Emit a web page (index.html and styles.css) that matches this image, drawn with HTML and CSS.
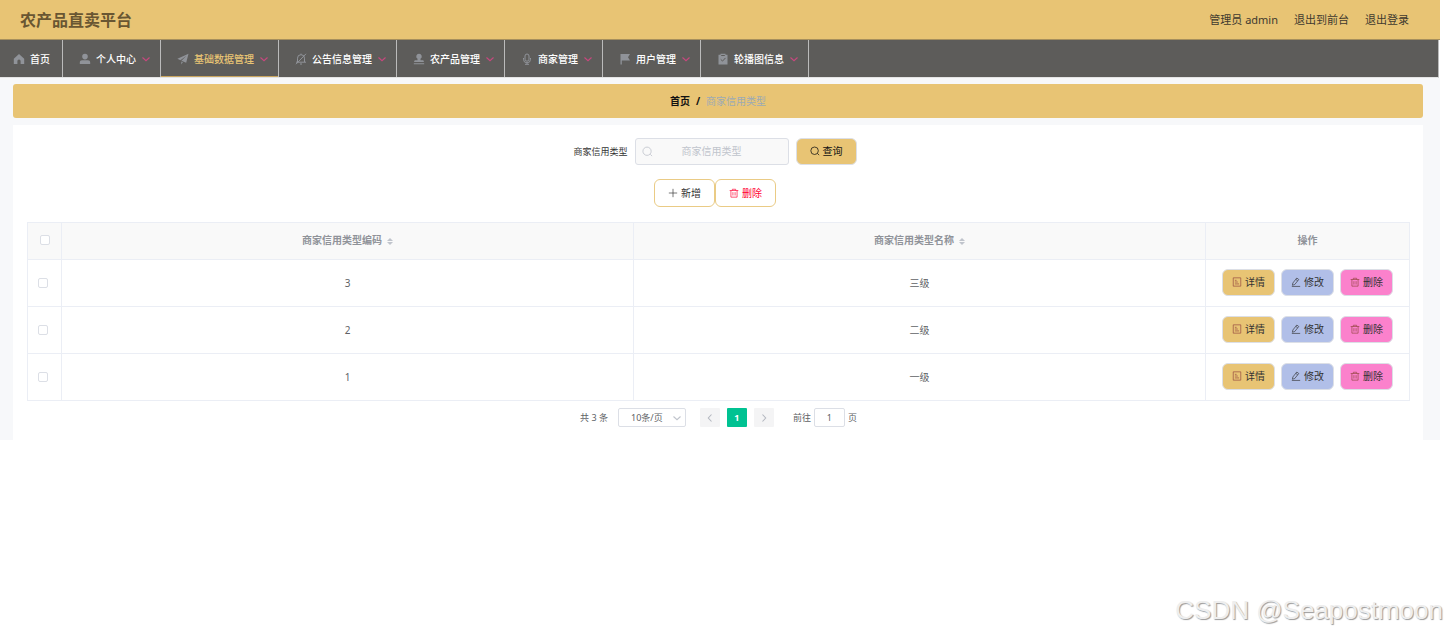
FILE: index.html
```html
<!DOCTYPE html>
<html lang="zh-CN">
<head>
    <meta charset="UTF-8">
    <meta name="viewport" content="width=device-width, initial-scale=1.0">
    <title>农产品直卖平台</title>
    <link rel="stylesheet" href="styles.css">
</head>
<body>
    <svg class="sprite" aria-hidden="true">
        <symbol id="i-down" viewBox="0 0 8 8"><path d="M.5 2.500L4 5.700l3.500-3.200" fill="none" stroke="currentColor" stroke-width="1.100"/></symbol>
        <symbol id="i-search" viewBox="0 0 12 12"><path d="M9 9l2 2M10 5.700a4.500 4.500 0 1 1-9 0 4.500 4.500 0 0 1 9 0z" fill="none" stroke="currentColor" stroke-width=".9"/></symbol>
        <symbol id="i-trash" viewBox="0 0 12 12"><path d="M.8 3h10.400M4 3V1.500h4V3M2.300 3v8h7.400V3M4.700 5v4M7.300 5v4" fill="none" stroke="currentColor" stroke-width=".8"/></symbol>
        <symbol id="i-doc" viewBox="0 0 12 12"><path d="M1.500 1h9v10h-9zM3.500 4h2M3.500 6h3.500M3.500 8.300h5" fill="none" stroke="currentColor" stroke-width=".8"/></symbol>
        <symbol id="i-edit" viewBox="0 0 12 12"><path d="M2.200 7.200L7 1.200l2.300 1.800-4.800 6-2.800.9zM1 11.300h10M5.800 2.800l2.200 1.800" fill="none" stroke="currentColor" stroke-width=".8"/></symbol>
    </svg>

    <header class="topbar">
        <h1>农产品直卖平台</h1>
        <div class="topbar-links">
            <span>管理员 admin</span>
            <a href="#">退出到前台</a>
            <a href="#">退出登录</a>
        </div>
    </header>

    <nav class="menu">
        <a href="#" class="menu-item home">
            <svg class="icon" viewBox="0 0 12 12"><path d="M6 1L.8 5.800V11h3.600V8a1.600 1.600 0 0 1 3.200 0v3h3.600V5.800z" fill="currentColor"/></svg>
            <span>首页</span>
        </a>
        <a href="#" class="menu-item">
            <svg class="icon" viewBox="0 0 12 12"><path d="M6 .8a2.800 2.800 0 1 1 0 5.600A2.800 2.800 0 0 1 6 .8zM.8 11V9.400c0-1.300 1-2.200 2.200-2.200h6c1.200 0 2.200.9 2.200 2.200V11z" fill="currentColor"/></svg>
            <span>个人中心</span>
            <svg class="arrow"><use href="#i-down"/></svg>
        </a>
        <a href="#" class="menu-item active">
            <svg class="icon" viewBox="0 0 12 12"><path d="M11.500.8L.4 5.800l3 1.400L9.500 2.800 4.400 7.700l4.800 2.100zM4.300 8.500v3l1.600-2.200z" fill="currentColor"/></svg>
            <span>基础数据管理</span>
            <svg class="arrow"><use href="#i-down"/></svg>
        </a>
        <a href="#" class="menu-item">
            <svg class="icon" viewBox="0 0 12 12"><path d="M2.500 9V5.200a3.500 3.500 0 0 1 7 0V9M1 9.200h10M5 11h2M6 .6v1M11 .8L1 11.200" fill="none" stroke="currentColor"/></svg>
            <span>公告信息管理</span>
            <svg class="arrow"><use href="#i-down"/></svg>
        </a>
        <a href="#" class="menu-item">
            <svg class="icon" viewBox="0 0 12 12"><path d="M6 .8a2.700 2.700 0 0 1 1.500 5v1.400h2.800l.7 1.800H1l.7-1.800h2.800V5.800A2.700 2.700 0 0 1 6 .8zM.8 10.200h10.400v1H.8z" fill="currentColor"/></svg>
            <span>农产品管理</span>
            <svg class="arrow"><use href="#i-down"/></svg>
        </a>
        <a href="#" class="menu-item">
            <svg class="icon" viewBox="0 0 12 12"><path d="M4 3a2 2 0 0 1 4 0v3.200a2 2 0 0 1-4 0zM2.500 5v1.300a3.500 3.500 0 0 0 7 0V5M6 9.800v1.400M4 11.300h4" fill="none" stroke="currentColor"/></svg>
            <span>商家管理</span>
            <svg class="arrow"><use href="#i-down"/></svg>
        </a>
        <a href="#" class="menu-item">
            <svg class="icon" viewBox="0 0 12 12"><path d="M1.500 1H11L9 4.200l2 3.200H2.800v4.200H1.500z" fill="currentColor"/></svg>
            <span>用户管理</span>
            <svg class="arrow"><use href="#i-down"/></svg>
        </a>
        <a href="#" class="menu-item">
            <svg class="icon" viewBox="0 0 12 12"><path d="M1.500 1.700h2V.8h5v.9h2v9.800h-9z" fill="currentColor"/><path d="M3.700 6.300l1.800 1.800 3-3.200M4.200 2.500h3.600" class="tick" fill="none"/></svg>
            <span>轮播图信息</span>
            <svg class="arrow"><use href="#i-down"/></svg>
        </a>
    </nav>

    <main class="page">
        <div class="breadcrumb">
            <a href="#">首页</a>
            <span>/</span>
            <span class="current">商家信用类型</span>
        </div>

        <div class="content">
            <form class="search">
                <label for="creditType">商家信用类型</label>
                <div class="search-box">
                    <svg class="icon"><use href="#i-search"/></svg>
                    <input type="text" id="creditType" placeholder="商家信用类型">
                </div>
                <button type="button" class="btn btn-search"><svg class="icon"><use href="#i-search"/></svg>查询</button>
            </form>

            <div class="toolbar">
                <button type="button" class="btn btn-add"><svg class="icon" viewBox="0 0 12 12"><path d="M6 1v10M1 6h10" stroke="currentColor" stroke-width=".8"/></svg>新增</button>
                <button type="button" class="btn btn-del"><svg class="icon"><use href="#i-trash"/></svg>删除</button>
            </div>

            <table>
                <colgroup>
                    <col class="col-check">
                    <col>
                    <col>
                    <col class="col-actions">
                </colgroup>
                <thead>
                    <tr>
                        <th><input type="checkbox" aria-label="全选"></th>
                        <th>商家信用类型编码<span class="sort"></span></th>
                        <th>商家信用类型名称<span class="sort"></span></th>
                        <th>操作</th>
                    </tr>
                </thead>
                <tbody>
                    <tr>
                        <td><input type="checkbox" aria-label="选择 3"></td>
                        <td>3</td>
                        <td>三级</td>
                        <td>
                            <div class="actions">
                                <button type="button" class="btn detail"><svg class="icon"><use href="#i-doc"/></svg>详情</button>
                                <button type="button" class="btn edit"><svg class="icon"><use href="#i-edit"/></svg>修改</button>
                                <button type="button" class="btn remove"><svg class="icon"><use href="#i-trash"/></svg>删除</button>
                            </div>
                        </td>
                    </tr>
                    <tr>
                        <td><input type="checkbox" aria-label="选择 2"></td>
                        <td>2</td>
                        <td>二级</td>
                        <td>
                            <div class="actions">
                                <button type="button" class="btn detail"><svg class="icon"><use href="#i-doc"/></svg>详情</button>
                                <button type="button" class="btn edit"><svg class="icon"><use href="#i-edit"/></svg>修改</button>
                                <button type="button" class="btn remove"><svg class="icon"><use href="#i-trash"/></svg>删除</button>
                            </div>
                        </td>
                    </tr>
                    <tr>
                        <td><input type="checkbox" aria-label="选择 1"></td>
                        <td>1</td>
                        <td>一级</td>
                        <td>
                            <div class="actions">
                                <button type="button" class="btn detail"><svg class="icon"><use href="#i-doc"/></svg>详情</button>
                                <button type="button" class="btn edit"><svg class="icon"><use href="#i-edit"/></svg>修改</button>
                                <button type="button" class="btn remove"><svg class="icon"><use href="#i-trash"/></svg>删除</button>
                            </div>
                        </td>
                    </tr>
                </tbody>
            </table>

            <div class="pagination">
                <span>共 3 条</span>
                <div class="size">
                    <select aria-label="每页条数">
                        <option>10条/页</option>
                        <option>20条/页</option>
                    </select>
                    <svg class="arrow"><use href="#i-down"/></svg>
                </div>
                <div class="pager">
                    <button type="button" disabled aria-label="上一页"><svg class="arrow prev"><use href="#i-down"/></svg></button>
                    <button type="button" class="current">1</button>
                    <button type="button" disabled aria-label="下一页"><svg class="arrow next"><use href="#i-down"/></svg></button>
                </div>
                <label class="jump">前往<input type="text" value="1">页</label>
            </div>
        </div>
    </main>

    <div class="watermark">CSDN @Seapostmoon</div>
</body>
</html>
```
FILE: styles.css
```css
* { box-sizing: border-box; }
body { margin: 0; padding-right: 7px; background-color: #fff; color: #606266; font-family: "Noto Sans", "Noto Sans CJK SC", sans-serif; font-size: 10px; line-height: 16px; }
a { color: inherit; text-decoration: none; }
button, input, select { font: inherit; color: inherit; margin: 0; }
button { cursor: pointer; }
.sprite { display: none; }
.icon { width: 12px; height: 12px; flex: none; }
.arrow { width: 8px; height: 8px; flex: none; }

/* top bar */
.topbar { display: flex; justify-content: space-between; align-items: center; height: 40px; padding: 0 31px 0 20px; background-color: #e8c474; border-bottom: 1px solid #a68f5d; }
.topbar h1 { margin: 0; font-size: 16px; line-height: 24px; color: #695632; }
.topbar-links { display: flex; gap: 16px; font-size: 11px; color: #3f3a2f; }

/* menu */
.menu { display: flex; height: 38px; margin-right: 1px; background-color: #5d5c5a; border-bottom: 1px solid #e4e4e4; border-right: 1px solid #bbb; }
.menu-item { display: flex; align-items: center; padding: 0 10px 0 16px; border-right: 1px solid #bbb; color: #fff; font-weight: 500; }
.menu-item.home { padding: 0 12px 0 13px; }
.menu-item .icon { margin-right: 5px; color: #909399; }
.menu-item .arrow { margin-left: 6px; color: #c9487f; }
.menu-item.active { color: #e8c474; box-shadow: inset 0 -1px #c9a55f; }
.menu-item .tick { stroke: #5d5c5a; }

/* page */
.page { padding: 6px 17px 0 13px; background-color: #f7f8fa; }
.breadcrumb { display: flex; justify-content: center; align-items: center; gap: 6px; height: 34px; margin-bottom: 7px; border-radius: 3px; background-color: #e8c474; color: #111; font-weight: bold; }
.breadcrumb .current { color: #9caab5; font-weight: normal; }
.content { padding: 13px 13px 13px 14px; background-color: #fff; }

.btn { display: flex; align-items: center; justify-content: center; gap: 3px; height: 27px; padding: 0 0 1px; border: 1px solid #dcdfe6; border-radius: 6px; background-color: #fff; color: #333; }
.btn .icon { width: 10px; height: 10px; }
.search { display: flex; justify-content: center; align-items: center; gap: 7px; padding-right: 7px; }
.search label { font-size: 9px; color: #333; }
.search-box { position: relative; width: 154px; }
.search-box input { display: block; width: 100%; height: 27px; padding: 0 12px 1px; border: 1px solid #dcdfe6; border-radius: 3px; background-color: #f9f9f9; text-align: center; }
.search-box input::placeholder { color: #c0c4cc; }
.search-box .icon { position: absolute; left: 7px; top: 8px; width: 11px; height: 11px; color: #c0c4cc; }
.btn-search { width: 61px; background-color: #e8c474; color: #111; }

.toolbar { display: flex; justify-content: center; margin: 14px 0 15px; padding-right: 7px; }
.toolbar .btn { width: 61px; height: 28px; border-color: #eacb85; }
.toolbar .btn-del { color: #f03; }

/* table */
table { width: 100%; table-layout: fixed; border-collapse: collapse; }
.col-check { width: 34px; }
.col-actions { width: 204px; }
th, td { height: 47px; padding: 0 0 1px; border: 1px solid #ebeef5; text-align: center; }
th { height: 37px; padding-bottom: 2px; background-color: #f9f9f9; color: #909399; font-weight: bold; }
input[type="checkbox"] { appearance: none; display: block; width: 10px; height: 10px; margin: 0 auto; border: 1px solid #dcdfe6; border-radius: 2px; background-color: #fff; }
td:first-child { padding-right: 4px; }
.sort { display: inline-flex; flex-direction: column; gap: 1px; margin-left: 5px; vertical-align: middle; }
.sort::before, .sort::after { content: ""; border: 3px solid transparent; }
.sort::before { border-top: 0; border-bottom-color: #c0c4cc; }
.sort::after { border-bottom: 0; border-top-color: #c0c4cc; }
.actions { display: flex; justify-content: center; gap: 6px; }
.actions .btn { width: 53px; }
.actions .detail { background-color: #e8c474; }
.actions .edit { background-color: #b1bfe8; }
.actions .remove { background-color: #fb81cc; }
.detail .icon, .remove .icon { color: #94453f; }

/* pagination */
.pagination { display: flex; justify-content: center; align-items: center; margin-top: 7px; font-size: 9px; }
.size { position: relative; margin: 0 14px 0 10px; }
.size select { appearance: none; display: block; width: 68px; height: 19px; padding: 0 10px 0 0; border: 1px solid #dcdfe6; border-radius: 2px; background-color: #fff; text-align: center; text-align-last: center; }
.size .arrow { position: absolute; right: 5px; top: 6px; color: #c0c4cc; pointer-events: none; }
.pager { display: flex; gap: 7px; }
.pager button { display: flex; align-items: center; justify-content: center; width: 20px; height: 19px; padding: 0; border: 0; border-radius: 1px; background-color: #f4f4f5; color: #b4b8c0; }
.pager .current { background-color: #00c292; color: #fff; font-weight: bold; }
.prev { transform: rotate(90deg); }
.next { transform: rotate(-90deg); }
.jump { display: flex; align-items: center; gap: 3px; margin-left: 19px; }
.jump input { width: 31px; height: 19px; padding: 0; border: 1px solid #dcdfe6; border-radius: 2px; text-align: center; }

.watermark { position: absolute; right: 4px; bottom: 8px; font-family: "Liberation Sans", Arial, sans-serif; font-size: 26px; line-height: 36px; color: #eee; text-shadow: 1px 1px 1px #999; }
```
